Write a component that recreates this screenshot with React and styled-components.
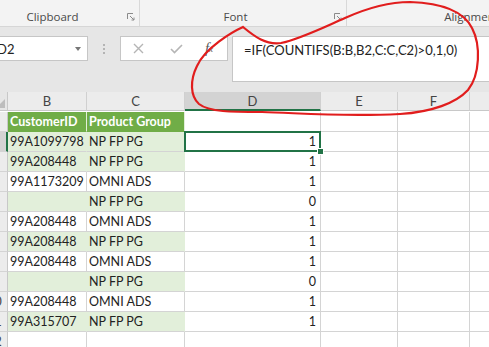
import React from "react";
import styled, { createGlobalStyle } from "styled-components";

const GlobalStyle = createGlobalStyle`
  html, body { margin: 0; padding: 0; }
  body { background: #fff; overflow: hidden; }
`;

const rows = [
  { id: "99A1099798", group: "NP FP PG", flag: 1, band: true },
  { id: "99A208448", group: "NP FP PG", flag: 1, band: true },
  { id: "99A1173209", group: "OMNI ADS", flag: 1 },
  { id: "", group: "NP FP PG", flag: 0, band: true },
  { id: "99A208448", group: "OMNI ADS", flag: 1 },
  { id: "99A208448", group: "NP FP PG", flag: 1, band: true },
  { id: "99A208448", group: "OMNI ADS", flag: 1 },
  { id: "", group: "NP FP PG", flag: 0, band: true },
  { id: "99A208448", group: "OMNI ADS", flag: 1 },
  { id: "99A315707", group: "NP FP PG", flag: 1, band: true },
];

const columns = ["B", "C", "D", "E", "F", "G"];

const Page = styled.div`
  position: relative;
  width: 489px;
  height: 347px;
  overflow: hidden;
  background: #fff;
  font-family: Lato, "Liberation Sans", sans-serif;
`;

const Ribbon = styled.div`
  display: flex;
  height: 26px;
  margin-left: -19px;
  background: #f3f3f3;
  border-bottom: 1px solid #d6d6d6;
`;

const Group = styled.div`
  display: flex;
  align-items: flex-end;
  flex: 0 0 ${(p) => p.$w}px;
  box-sizing: border-box;
  padding-bottom: 1px;
  border-right: 1px solid #d8d8d8;
`;

const GroupLabel = styled.div`
  flex: 1;
  text-align: center;
  font-family: "Open Sans", sans-serif;
  font-size: 11.5px;
  line-height: 16px;
  color: #4a4a4a;
  white-space: nowrap;
`;

const Launcher = styled.svg`
  flex: 0 0 8px;
  width: 8px;
  height: 8px;
  margin: 0 4px 4px 3px;
`;

const FormulaBar = styled.div`
  display: flex;
  align-items: flex-start;
  padding: 9px 0 10px;
  background: #e6e6e6;
`;

const NameBox = styled.div`
  display: flex;
  align-items: center;
  justify-content: space-between;
  width: 98px;
  height: 25px;
  margin-left: -10px;
  padding: 0 6px;
  box-sizing: border-box;
  background: #fff;
  border: 1px solid #c6c6c6;
  font-size: 13px;
  color: #222;
`;

const Caret = styled.span`
  width: 0;
  height: 0;
  border-left: 3.5px solid transparent;
  border-right: 3.5px solid transparent;
  border-top: 4px solid #777;
`;

const Grip = styled.div`
  display: flex;
  flex-direction: column;
  align-items: center;
  justify-content: center;
  gap: 2px;
  width: 32px;
  height: 25px;

  span {
    width: 2px;
    height: 2px;
    background: #b4b4b4;
  }
`;

const FxBox = styled.div`
  display: flex;
  align-items: center;
  width: 108px;
  height: 25px;
  box-sizing: border-box;
  background: #fff;
  border: 1px solid #c6c6c6;
`;

const FxButton = styled.div`
  display: flex;
  align-items: center;
  justify-content: center;
  flex: 0 0 ${(p) => p.$w}px;
  height: 100%;
  color: #5a5a5a;
  font-family: "Liberation Serif", serif;
  font-style: italic;
  font-size: 15px;

  sub {
    font-size: 9px;
    vertical-align: -2px;
  }
`;

const FormulaInput = styled.div`
  flex: 1;
  height: 46px;
  margin-left: 4px;
  padding: 4px 0 0 11px;
  box-sizing: border-box;
  background: #fff;
  border: 1px solid #c6c6c6;
  border-right: none;
  font-size: 13px;
  line-height: 18px;
  color: #222;
  white-space: nowrap;
`;

const Sheet = styled.div`
  display: grid;
  grid-template-columns: 26px 79px 98px 136px 77px 72px 72px;
  grid-auto-rows: 20px;
  margin-left: -18px;
  font-size: 12.5px;
  color: #222;
`;

const Corner = styled.div`
  position: relative;
  height: 19px;
  background: #e6e6e6;
  border-right: 1px solid #c8c8c8;
  border-bottom: 1px solid #c8c8c8;
  box-sizing: border-box;

  &::after {
    content: "";
    position: absolute;
    right: 2px;
    bottom: 2px;
    border-left: 9px solid transparent;
    border-bottom: 9px solid #bdbdbd;
  }
`;

const ColHead = styled.div`
  display: flex;
  align-items: center;
  justify-content: center;
  height: 19px;
  box-sizing: border-box;
  background: ${(p) => (p.$active ? "#d3d3d3" : "#ececec")};
  border-right: 1px solid #d0d0d0;
  border-bottom: ${(p) => (p.$active ? "2px solid #217346" : "1px solid #c8c8c8")};
  color: #444;
  font-size: 13px;
`;

const RowHead = styled.div`
  display: flex;
  align-items: center;
  justify-content: center;
  box-sizing: border-box;
  background: ${(p) => (p.$active ? "#d3d3d3" : "#ececec")};
  border-right: ${(p) => (p.$active ? "2px solid #217346" : "1px solid #c8c8c8")};
  border-bottom: 1px solid #d4d4d4;
  color: #444;
  font-size: 12.5px;
`;

const tones = {
  head: "#70ad47",
  band: "#e2efda",
  plain: "#fff",
};

const Cell = styled.div`
  position: relative;
  display: flex;
  align-items: center;
  justify-content: ${(p) => (p.$right ? "flex-end" : "flex-start")};
  padding: ${(p) => (p.$right ? "0 4px 0 0" : "0 0 0 2px")};
  box-sizing: border-box;
  background: ${(p) => tones[p.$tone || "plain"]};
  border-right: 1px solid ${(p) => (p.$tone && p.$tone !== "plain" ? "#e2efda" : "#d4d4d4")};
  border-bottom: 1px solid ${(p) => (p.$tone === "head" ? "#70ad47" : "#d4d4d4")};
  color: ${(p) => (p.$tone === "head" ? "#fff" : "#222")};
  font-weight: ${(p) => (p.$tone === "head" ? 700 : 400)};
  white-space: nowrap;

  ${(p) =>
    p.$selected &&
    `
    &::before {
      content: "";
      position: absolute;
      inset: -1px -1px -1px -1px;
      border: 2px solid #217346;
    }
    &::after {
      content: "";
      position: absolute;
      right: -4px;
      bottom: -4px;
      width: 5px;
      height: 5px;
      background: #217346;
      border: 1px solid #fff;
      z-index: 1;
    }
  `}
`;

const Annotation = styled.svg`
  position: absolute;
  inset: 0;
  width: 489px;
  height: 347px;
  pointer-events: none;
`;

const LaunchIcon = () => (
  <Launcher viewBox="0 0 8 8">
    <path d="M0.5 6V0.5H6" fill="none" stroke="#8a8a8a" strokeWidth="1" />
    <path d="M3 3L7 7M7 4.5V7H4.5" fill="none" stroke="#8a8a8a" strokeWidth="1" />
  </Launcher>
);

const App = () => {
  return (
    <Page>
      <GlobalStyle />
      <Ribbon>
        <Group $w={159}>
          <GroupLabel>Clipboard</GroupLabel>
          <LaunchIcon />
        </Group>
        <Group $w={207}>
          <GroupLabel>Font</GroupLabel>
          <LaunchIcon />
        </Group>
        <Group $w={265}>
          <GroupLabel>Alignment</GroupLabel>
          <LaunchIcon />
        </Group>
      </Ribbon>

      <FormulaBar>
        <NameBox>
          <span>D2</span>
          <Caret />
        </NameBox>
        <Grip>
          <span />
          <span />
          <span />
        </Grip>
        <FxBox>
          <FxButton $w={34}>
            <svg width="11" height="11" viewBox="0 0 11 11">
              <path d="M1 1L10 10M10 1L1 10" stroke="#b5b5b5" strokeWidth="1.4" />
            </svg>
          </FxButton>
          <FxButton $w={42}>
            <svg width="13" height="10" viewBox="0 0 13 10">
              <path d="M1 5L4.5 8.5L12 1" fill="none" stroke="#b5b5b5" strokeWidth="1.6" />
            </svg>
          </FxButton>
          <FxButton $w={24}>
            f<sub>x</sub>
          </FxButton>
        </FxBox>
        <FormulaInput>=IF(COUNTIFS(B:B,B2,C:C,C2)&gt;0,1,0)</FormulaInput>
      </FormulaBar>

      <Sheet>
        <Corner />
        {columns.map((c) => (
          <ColHead key={c} $active={c === "D"}>
            {c}
          </ColHead>
        ))}

        <RowHead>1</RowHead>
        <Cell $tone="head">CustomerID</Cell>
        <Cell $tone="head">Product Group</Cell>
        <Cell />
        <Cell />
        <Cell />
        <Cell />

        {rows.map((r, i) => (
          <React.Fragment key={i}>
            <RowHead $active={i === 0}>{i + 2}</RowHead>
            <Cell $tone={r.band ? "band" : "plain"}>{r.id}</Cell>
            <Cell $tone={r.band ? "band" : "plain"}>{r.group}</Cell>
            <Cell $right $selected={i === 0}>
              {r.flag}
            </Cell>
            <Cell />
            <Cell />
            <Cell />
          </React.Fragment>
        ))}

        <RowHead>12</RowHead>
        <Cell />
        <Cell />
        <Cell />
        <Cell />
        <Cell />
        <Cell />
      </Sheet>

      <Annotation viewBox="0 0 489 347">
        <path
          d="M243 27 C232 32 205 48 197 66 C190 80 190 96 199 104 C209 112 232 112 262 112 C300 113 340 117 400 114 C432 112 456 103 468 90 C480 75 481 45 472 28 C463 10 440 3 410 2 C386 2 365 9 345 18 C322 28 300 39 281 43 C266 45 255 37 243 27"
          fill="none"
          stroke="#e11d1d"
          strokeWidth="2.2"
          strokeLinecap="round"
        />
      </Annotation>
    </Page>
  );
};

export default App;
